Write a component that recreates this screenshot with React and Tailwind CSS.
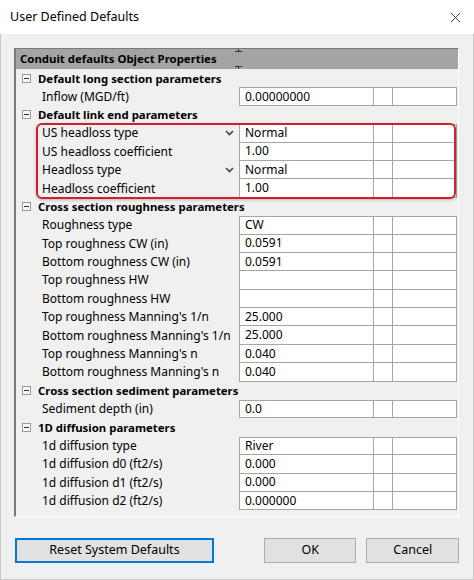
import { X } from 'lucide-react'

// rows of the property grid: s = section header, r = property row
const groups = [
  {
    title: 'Default long section parameters',
    rows: [{ label: 'Inflow (MGD/ft)', value: '0.00000000' }],
  },
  {
    title: 'Default link end parameters',
    boxed: true,
    rows: [
      { label: 'US headloss type', value: 'Normal', drop: true },
      { label: 'US headloss coefficient', value: '1.00' },
      { label: 'Headloss type', value: 'Normal', drop: true },
      { label: 'Headloss coefficient', value: '1.00' },
    ],
  },
  {
    title: 'Cross section roughness parameters',
    rows: [
      { label: 'Roughness type', value: 'CW' },
      { label: 'Top roughness CW (in)', value: '0.0591' },
      { label: 'Bottom roughness CW (in)', value: '0.0591' },
      { label: 'Top roughness HW', value: '' },
      { label: 'Bottom roughness HW', value: '' },
      { label: "Top roughness Manning's 1/n", value: '25.000' },
      { label: "Bottom roughness Manning's 1/n", value: '25.000' },
      { label: "Top roughness Manning's n", value: '0.040' },
      { label: "Bottom roughness Manning's n", value: '0.040' },
    ],
  },
  {
    title: 'Cross section sediment parameters',
    rows: [{ label: 'Sediment depth (in)', value: '0.0' }],
  },
  {
    title: '1D diffusion parameters',
    rows: [
      { label: '1d diffusion type', value: 'River' },
      { label: '1d diffusion d0 (ft2/s)', value: '0.000' },
      { label: '1d diffusion d1 (ft2/s)', value: '0.000' },
      { label: '1d diffusion d2 (ft2/s)', value: '0.000000' },
    ],
  },
]

function Collapse() {
  return (
    <span className="flex h-[9px] w-[9px] items-center justify-center border border-[#9a9a9a] bg-[#f7f7f7]">
      <span className="h-px w-[5px] bg-[#333]" />
    </span>
  )
}

function Chevron() {
  return (
    <svg width="9" height="6" viewBox="0 0 9 6" className="text-[#444]">
      <polyline points="1,1 4.5,4.5 8,1" fill="none" stroke="currentColor" strokeWidth="1.6" />
    </svg>
  )
}

function SectionRow({ title }) {
  return (
    <div className="flex h-[18.4px] items-center pl-[6px]">
      <Collapse />
      <span className="ml-[7px] text-[11.4px] font-bold">{title}</span>
    </div>
  )
}

function PropRow({ label, value, drop, first }) {
  return (
    <div className="flex h-[18.4px] items-stretch">
      <div className="flex w-[223px] items-center justify-between pl-[26px] pr-[5px]">
        <span>{label}</span>
        {drop && <Chevron />}
      </div>
      <div
        className={`flex w-[218px] border-x border-b border-[#a6a6a6] bg-white ${first ? 'border-t' : ''}`}
      >
        <div className="flex w-[134px] items-center border-r border-[#a6a6a6] pl-[5px]">{value}</div>
        <div className="w-[19px] border-r border-[#a6a6a6]" />
        <div className="flex-1" />
      </div>
    </div>
  )
}

export default function App() {
  return (
    <div
      className="flex h-[580px] w-[474px] flex-col bg-white text-[12px] text-black"
      style={{ fontFamily: '"Noto Sans", "Open Sans", sans-serif' }}
    >
      {/* title bar */}
      <div className="flex h-[34px] shrink-0 items-center justify-between pl-[10px] pr-[10px]">
        <span className="text-[12.5px]">User Defined Defaults</span>
        <X size={17} strokeWidth={1.2} className="text-[#222]" />
      </div>

      <div className="flex flex-1 flex-col border-x border-b border-[#c8c8c8] bg-[#f0f0f0] pl-[13px] pr-[14px] pt-[14px]">
        {/* property grid */}
        <div className="h-[469px] border-l-2 border-t border-[#7a7a7a] border-r border-r-white border-b border-b-white">
          <div className="relative flex h-[20px] items-center bg-[#a4a4a4] pl-[4px] text-[11.4px] font-bold">
            Conduit defaults Object Properties
            <span className="absolute left-[222px] top-0 h-[3px] w-px bg-[#333]" />
            <span className="absolute left-[219px] top-[2px] h-px w-[7px] bg-[#333]" />
            <span className="absolute bottom-0 left-[222px] h-[3px] w-px bg-[#333]" />
            <span className="absolute bottom-[2px] left-[219px] h-px w-[7px] bg-[#333]" />
          </div>

          {groups.map((g) => (
            <div key={g.title}>
              <SectionRow title={g.title} />
              <div className="relative">
                {g.rows.map((r, i) => (
                  <PropRow key={r.label} {...r} first={i === 0} />
                ))}
                {g.boxed && (
                  <div className="pointer-events-none absolute bottom-[-1px] left-[20px] right-[2px] top-[-1px] rounded-[6px] border-2 border-[#d21f2c] shadow-[0_1px_3px_rgba(0,0,0,0.25)]" />
                )}
              </div>
            </div>
          ))}
        </div>

        {/* buttons */}
        <div className="ml-[1px] mt-[21px] flex items-center text-[12.5px]">
          <button className="h-[25px] w-[200px] border-2 border-[#0078d7] bg-[#e1e1e1]">
            Reset System Defaults
          </button>
          <button className="ml-[50px] h-[25px] w-[93px] border border-[#adadad] bg-[#e1e1e1]">OK</button>
          <button className="ml-[10px] h-[25px] w-[93px] border border-[#adadad] bg-[#e1e1e1]">Cancel</button>
        </div>
      </div>
    </div>
  )
}
